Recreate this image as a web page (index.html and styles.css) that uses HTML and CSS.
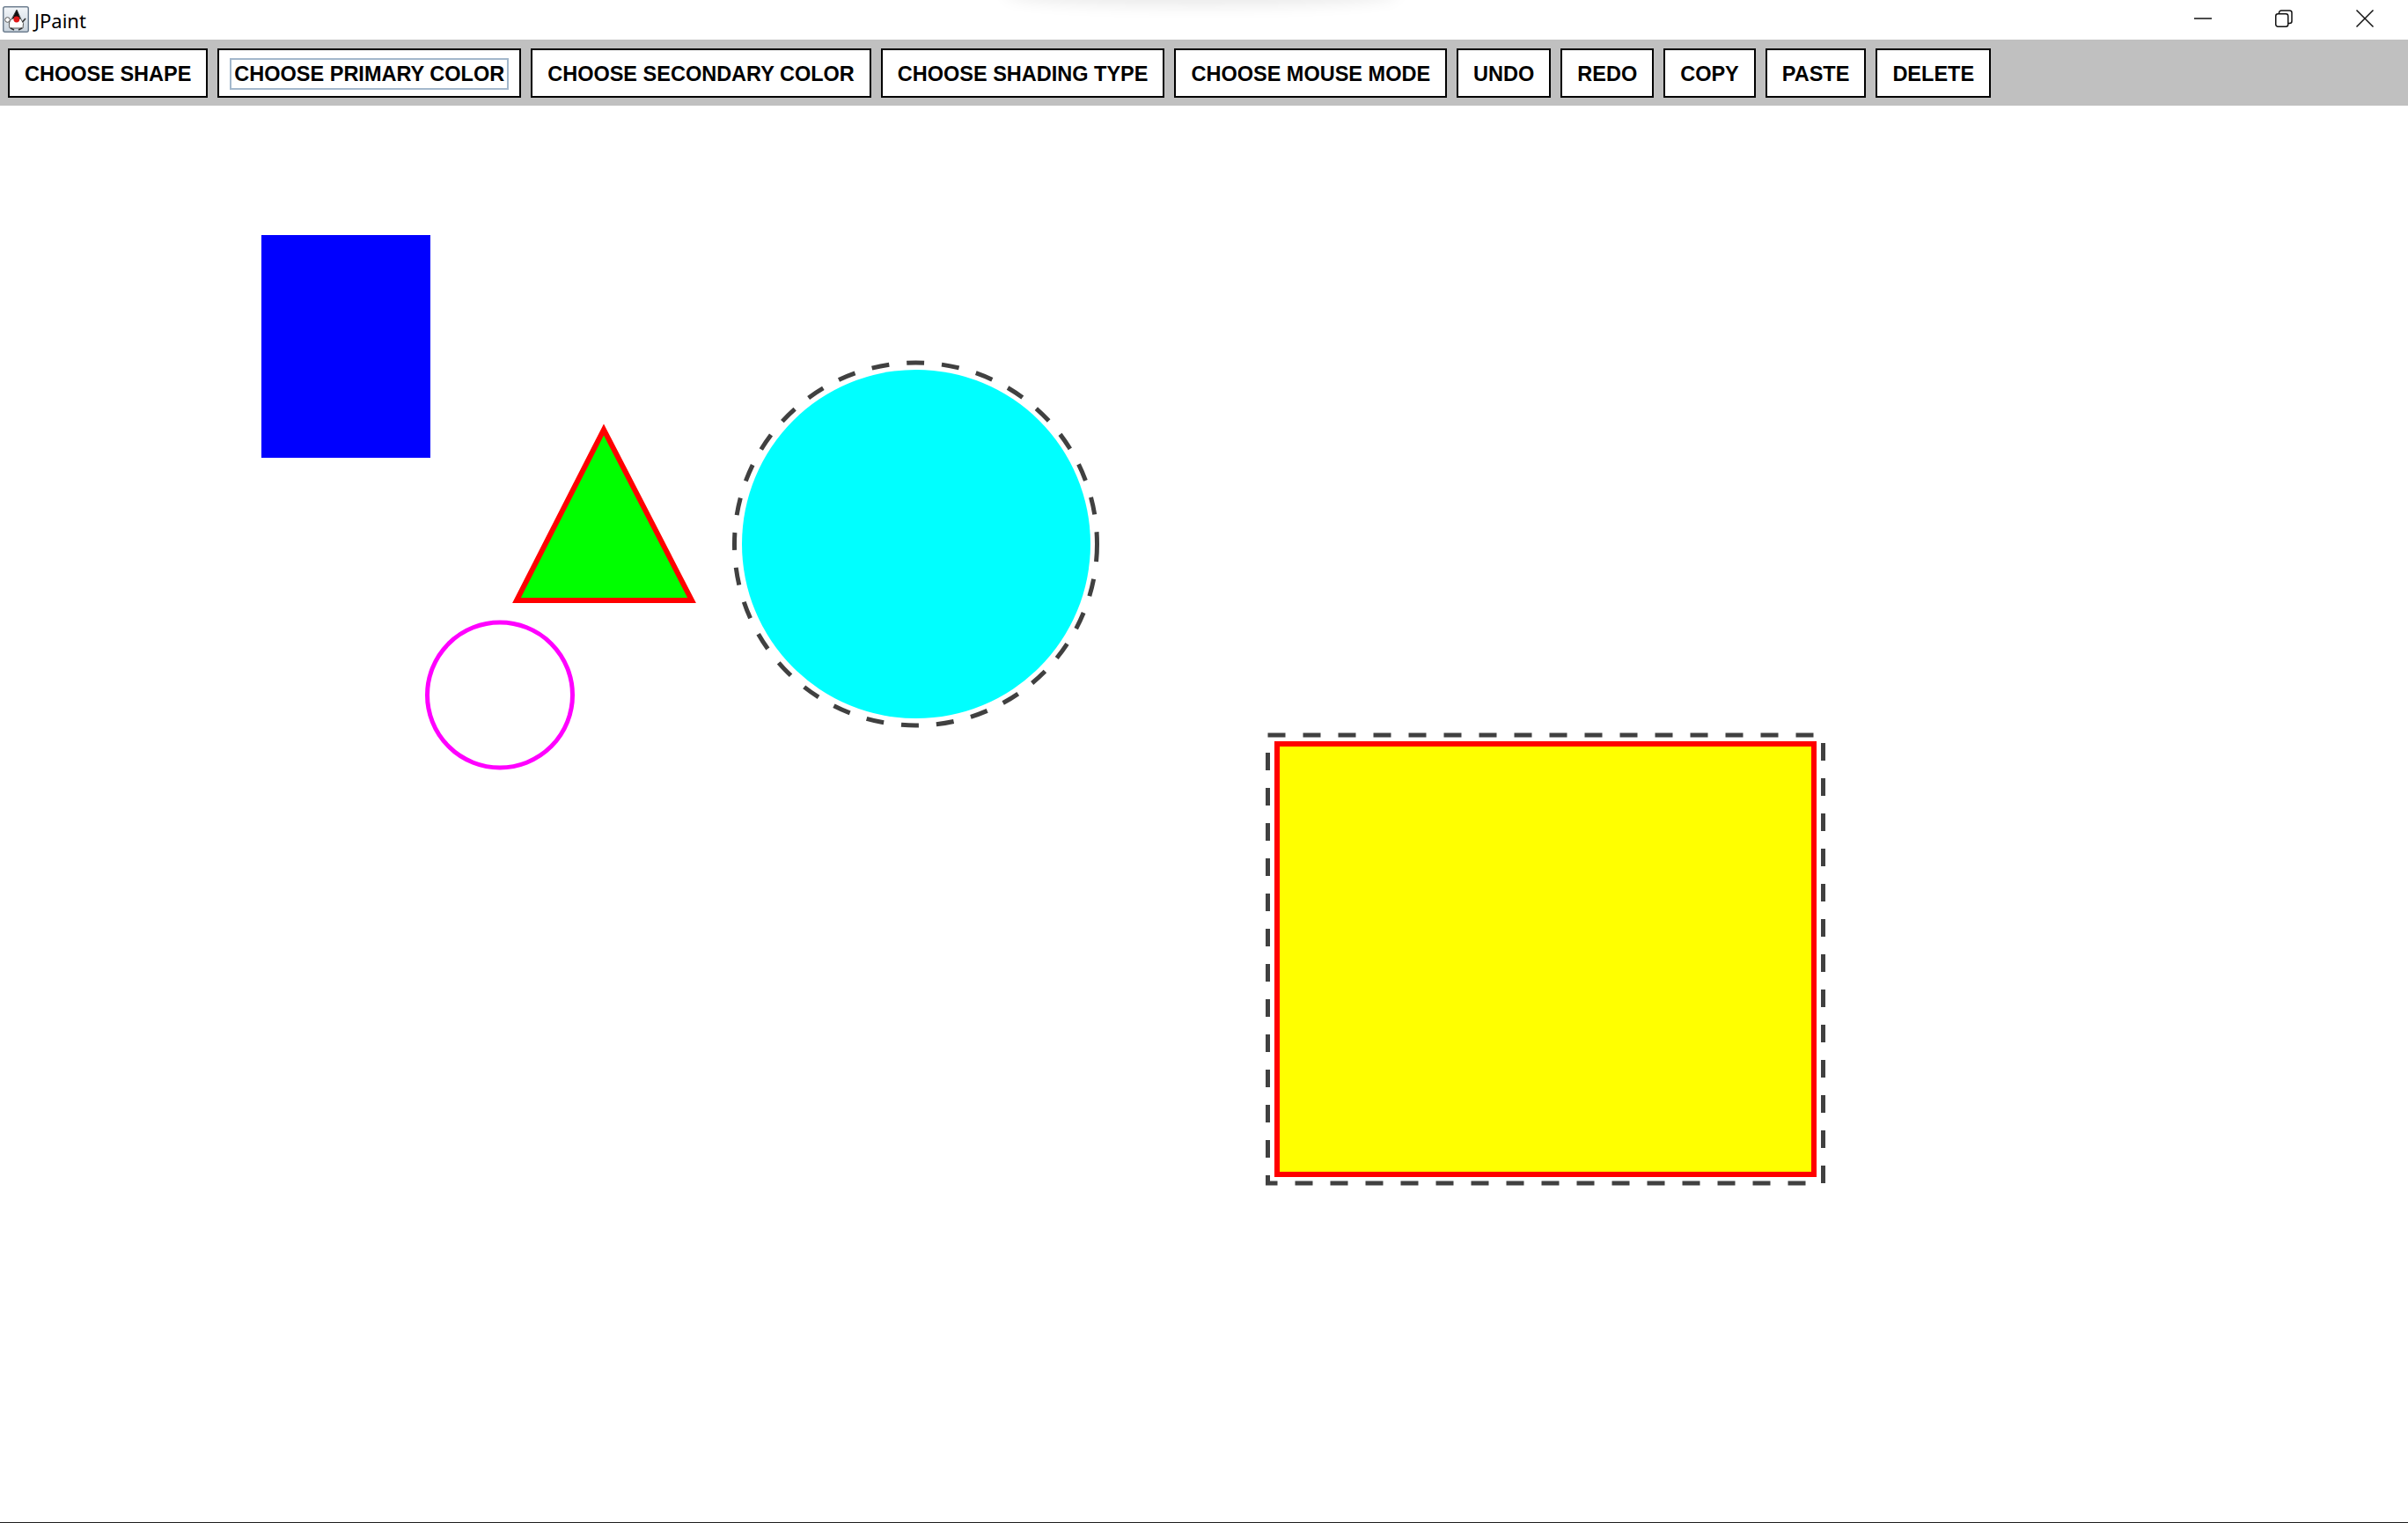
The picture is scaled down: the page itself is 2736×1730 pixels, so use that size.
FILE: index.html
```html
<!DOCTYPE html>
<html lang="en">
<head>
    <meta charset="UTF-8">
    <meta name="viewport" content="width=device-width, initial-scale=1.0">
    <title>JPaint</title>
    <link rel="stylesheet" href="styles.css">
</head>
<body>
    <div class="window">
        <div class="popup-shadow"></div>
        <div class="titlebar">
            <div class="title">
                <svg class="app-icon" width="30" height="30" viewBox="0 0 30 30">
                    <defs>
                        <linearGradient id="frame" x1="0" y1="0" x2="0" y2="1">
                            <stop offset="0" stop-color="#f4f7fa"/>
                            <stop offset="1" stop-color="#c9d3dd"/>
                        </linearGradient>
                    </defs>
                    <rect x="0.75" y="0.75" width="28.5" height="28.5" rx="2" fill="url(#frame)" stroke="#6f7f90" stroke-width="1.5"/>
                    <!-- duke -->
                    <path d="M8 25 Q6 18 10 15 L16 4 L21 15 Q25 19 23 25 Z" fill="#ffffff" stroke="#555" stroke-width="1"/>
                    <path d="M10.5 15 L16 4 L20.5 15 Q15.5 12.5 10.5 15 Z" fill="#111"/>
                    <circle cx="15.8" cy="15" r="3.4" fill="#e01818"/>
                    <circle cx="5.5" cy="15.5" r="2.8" fill="#fff" stroke="#555" stroke-width="1"/>
                    <path d="M22.5 18 L26 14" stroke="#333" stroke-width="1.6"/>
                    <path d="M9 25 L13 27 M22 25 L18 27" stroke="#333" stroke-width="1.4"/>
                </svg>
                <span>JPaint</span>
            </div>
            <div class="controls">
                <div class="ctrl">
                    <svg width="22" height="22" viewBox="0 0 22 22"><path d="M1 11 H21" stroke="#111" stroke-width="1.5"/></svg>
                </div>
                <div class="ctrl">
                    <svg width="22" height="22" viewBox="0 0 22 22" fill="none" stroke="#111" stroke-width="1.5">
                        <rect x="1.75" y="5.75" width="14" height="14.5" rx="2.5"/>
                        <path d="M5.5 5.5 V4.5 A2.5 2.5 0 0 1 8 2 H17.5 A2.5 2.5 0 0 1 20 4.5 V14 A2.5 2.5 0 0 1 17.5 16.5 H16"/>
                    </svg>
                </div>
                <div class="ctrl">
                    <svg width="22" height="22" viewBox="0 0 22 22"><path d="M1.5 1.5 L20.5 20.5 M20.5 1.5 L1.5 20.5" stroke="#111" stroke-width="1.5"/></svg>
                </div>
            </div>
        </div>

        <div class="toolbar">
            <button><span class="label">CHOOSE SHAPE</span></button>
            <button class="focused"><span class="label">CHOOSE PRIMARY COLOR</span></button>
            <button><span class="label">CHOOSE SECONDARY COLOR</span></button>
            <button><span class="label">CHOOSE SHADING TYPE</span></button>
            <button><span class="label">CHOOSE MOUSE MODE</span></button>
            <button><span class="label">UNDO</span></button>
            <button><span class="label">REDO</span></button>
            <button><span class="label">COPY</span></button>
            <button><span class="label">PASTE</span></button>
            <button><span class="label">DELETE</span></button>
        </div>

        <div class="canvas">
            <svg class="drawing" width="2736" height="1609" viewBox="0 120 2736 1609">
                <rect x="297" y="267" width="192" height="253" fill="#0000ff"/>
                <polygon points="686,488 587,682 786,682" fill="#00ff00" stroke="#ff0000" stroke-width="6"/>
                <circle cx="568" cy="789.5" r="82.5" fill="none" stroke="#ff00ff" stroke-width="5"/>

                <circle cx="1041" cy="618" r="198" fill="#00ffff"/>
                <circle class="selection" cx="1040.5" cy="618" r="206"/>

                <rect x="1451" y="845" width="610" height="489" fill="#ffff00" stroke="#ff0000" stroke-width="6"/>
                <rect class="selection" x="1440.5" y="835" width="631" height="509"/>
            </svg>
        </div>
    </div>
</body>
</html>
```

FILE: styles.css
```css
html, body {
    margin: 0;
    padding: 0;
    background-color: #fff;
}
.window {
    position: relative;
    display: flex;
    flex-direction: column;
    height: 100vh;
    overflow: hidden;
}
.popup-shadow {
    position: absolute;
    top: -26px;
    left: 1140px;
    width: 450px;
    height: 26px;
    border-radius: 50%;
    box-shadow: 0 6px 18px rgba(0, 0, 0, 0.09);
}
.titlebar {
    display: flex;
    justify-content: space-between;
    align-items: center;
    height: 45px;
    background-color: #fff;
}
.title {
    display: flex;
    align-items: center;
    gap: 6px;
    padding-left: 3px;
    font-family: "Noto Sans", "Open Sans", sans-serif;
    font-size: 22px;
    color: #000;
}
.app-icon {
    display: block;
    margin-top: -2px;
}
.controls {
    display: flex;
    padding-right: 3px;
    align-self: flex-start;
}
.ctrl {
    width: 92px;
    height: 42px;
    display: flex;
    justify-content: center;
    align-items: center;
}
.toolbar {
    display: flex;
    align-items: flex-start;
    gap: 11px;
    height: 75px;
    padding: 10px 9px 0;
    box-sizing: border-box;
    background-color: #c0c0c0;
}
.toolbar button {
    margin: 0;
    padding: 9px 12px 7px;
    background-color: #fff;
    border: 2px solid #000;
    border-radius: 0;
    font-family: "Liberation Sans", Arial, sans-serif;
    font-weight: bold;
    font-size: 23.5px;
    color: #000;
    white-space: nowrap;
    cursor: pointer;
}
.label {
    display: inline-block;
    line-height: 32px;
    padding: 0 3px;
    border: 2px solid transparent;
}
.focused .label {
    border-color: #a3b8cc;
}
.canvas {
    flex: 1;
    background-color: #fff;
    border-bottom: 1px solid #1e1e1e;
}
.drawing {
    display: block;
}
.selection {
    fill: none;
    stroke: #404040;
    stroke-width: 5;
    stroke-dasharray: 20 20;
}
```
